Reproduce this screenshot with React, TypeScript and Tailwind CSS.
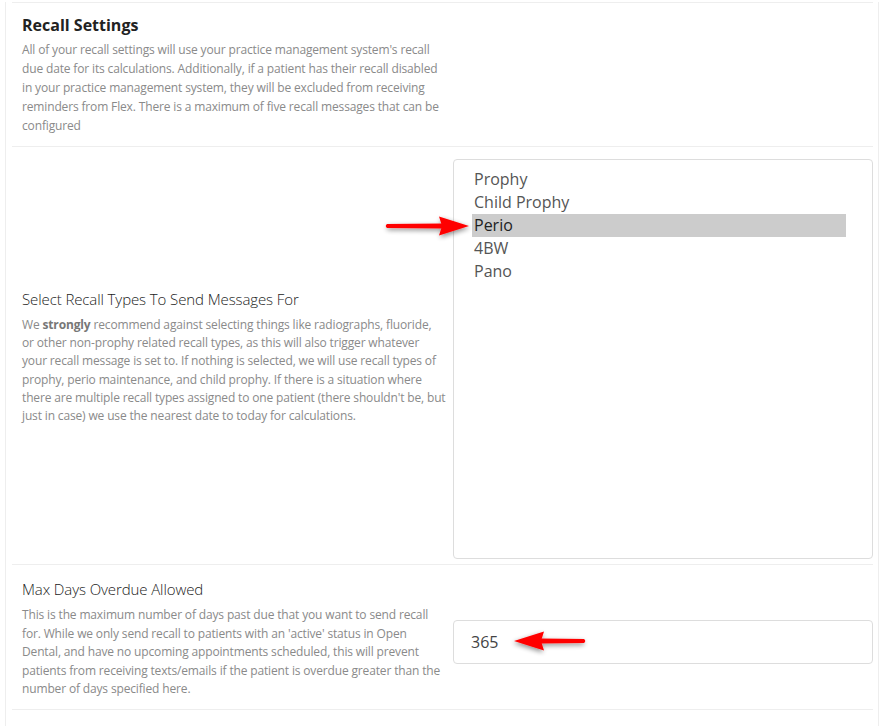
import { useState } from 'react';
import type { ReactNode } from 'react';

const recallTypes = ['Prophy', 'Child Prophy', 'Perio', '4BW', 'Pano'];

const introLines = [
  "All of your recall settings will use your practice management system's recall",
  'due date for its calculations. Additionally, if a patient has their recall disabled',
  'in your practice management system, they will be excluded from receiving',
  'reminders from Flex. There is a maximum of five recall messages that can be',
  'configured',
];

const typeLines: ReactNode[] = [
  <>
    We <strong className="font-bold text-[#777]">strongly</strong> recommend against selecting things like
    radiographs, fluoride,
  </>,
  'or other non-prophy related recall types, as this will also trigger whatever',
  'your recall message is set to. If nothing is selected, we will use recall types of',
  'prophy, perio maintenance, and child prophy. If there is a situation where',
  "there are multiple recall types assigned to one patient (there shouldn't be, but",
  'just in case) we use the nearest date to today for calculations.',
];

const overdueLines = [
  'This is the maximum number of days past due that you want to send recall',
  "for. While we only send recall to patients with an 'active' status in Open",
  'Dental, and have no upcoming appointments scheduled, this will prevent',
  'patients from receiving texts/emails if the patient is overdue greater than the',
  'number of days specified here.',
];

function Lines({ lines, className }: { lines: ReactNode[]; className: string }) {
  return (
    <p className={'text-[12px] tracking-[-0.15px] text-[#8a8a8a] ' + className}>
      {lines.map((l, i) => (
        <span key={i} className="block whitespace-nowrap">
          {l}
        </span>
      ))}
    </p>
  );
}

function RedArrow({ dir, length }: { dir: 'left' | 'right'; length: number }) {
  const w = length + 10;
  const headStart = length - 26;
  return (
    <svg width={w} height="34" viewBox={`0 0 ${w} 34`} className="overflow-visible">
      <defs>
        <filter id={`sh-${dir}`} x="-20%" y="-60%" width="140%" height="220%">
          <feGaussianBlur in="SourceAlpha" stdDeviation="2.5" />
          <feOffset dx="1" dy="2" />
          <feComponentTransfer>
            <feFuncA type="linear" slope="0.45" />
          </feComponentTransfer>
          <feMerge>
            <feMergeNode />
            <feMergeNode in="SourceGraphic" />
          </feMerge>
        </filter>
      </defs>
      <g filter={`url(#sh-${dir})`} transform={dir === 'left' ? `translate(${w},0) scale(-1,1)` : undefined}>
        <path
          d={`M4 15 L${headStart + 4} 14.6 L${headStart + 4} 19.4 L4 19 Q1.5 17 4 15 Z`}
          fill="#f00"
        />
        <path d={`M${headStart} 7.5 L${length + 4} 17 L${headStart} 26.5 L${headStart + 3} 17 Z`} fill="#f00" />
      </g>
    </svg>
  );
}

export default function App() {
  const [selected, setSelected] = useState('Perio');
  const [days, setDays] = useState('365');

  return (
    <div className="min-h-[726px] bg-white font-['Open_Sans',sans-serif]">
      <div className="ml-[5px] w-[874px] border-x border-[#eeeeee] pl-[6px] pr-[5px] pb-4">
        <div className="mt-[2px] border-y border-[#eeeeee] pl-[10px] pr-4 pt-[10px] pb-[11px]">
          <h2 className="text-[16px] font-bold leading-[24px] text-[#222]">Recall Settings</h2>
          <Lines lines={introLines} className="mt-[3px] leading-[19px]" />
        </div>

        <div className="flex items-center border-b border-[#eeeeee] pt-[12px] pb-[5px]">
          <div className="mb-[5px] w-[441px] shrink-0 pl-[10px] pr-[6px]">
            <div className="text-[15px] font-light leading-[22px] tracking-[-0.1px] text-[#222]">
              Select Recall Types To Send Messages For
            </div>
            <Lines lines={typeLines} className="mt-[6px] leading-[18.2px]" />
          </div>
          <div className="relative flex-1">
            <div className="h-[400px] rounded-[4px] border border-[#dddddd] pt-[8px] pl-[18px] pr-[26px]">
              {recallTypes.map((t) => (
                <div
                  key={t}
                  onClick={() => setSelected(t)}
                  className={
                    'cursor-default pl-[2px] text-[16px] leading-[23px] ' +
                    (selected === t ? 'bg-[#cccccc] text-[#222]' : 'text-[#555]')
                  }
                >
                  {t}
                </div>
              ))}
            </div>
            <div className="absolute left-[-70px] top-[50px]">
              <RedArrow dir="right" length={82} />
            </div>
          </div>
        </div>

        <div className="flex items-center border-b border-[#eeeeee] pt-[13px] pb-[10px]">
          <div className="w-[441px] shrink-0 pl-[10px] pr-[6px]">
            <div className="text-[15px] font-light leading-[22px] tracking-[-0.1px] text-[#222]">
              Max Days Overdue Allowed
            </div>
            <Lines lines={overdueLines} className="mt-[6px] leading-[18.5px]" />
          </div>
          <div className="relative mt-[7px] flex-1">
            <input
              value={days}
              onChange={(e) => setDays(e.target.value)}
              className="h-[44px] w-full rounded-[4px] border border-[#dddddd] px-[17px] text-[16px] text-[#444] outline-none"
            />
            <div className="absolute left-[55px] top-[4px]">
              <RedArrow dir="left" length={70} />
            </div>
          </div>
        </div>
      </div>
    </div>
  );
}
